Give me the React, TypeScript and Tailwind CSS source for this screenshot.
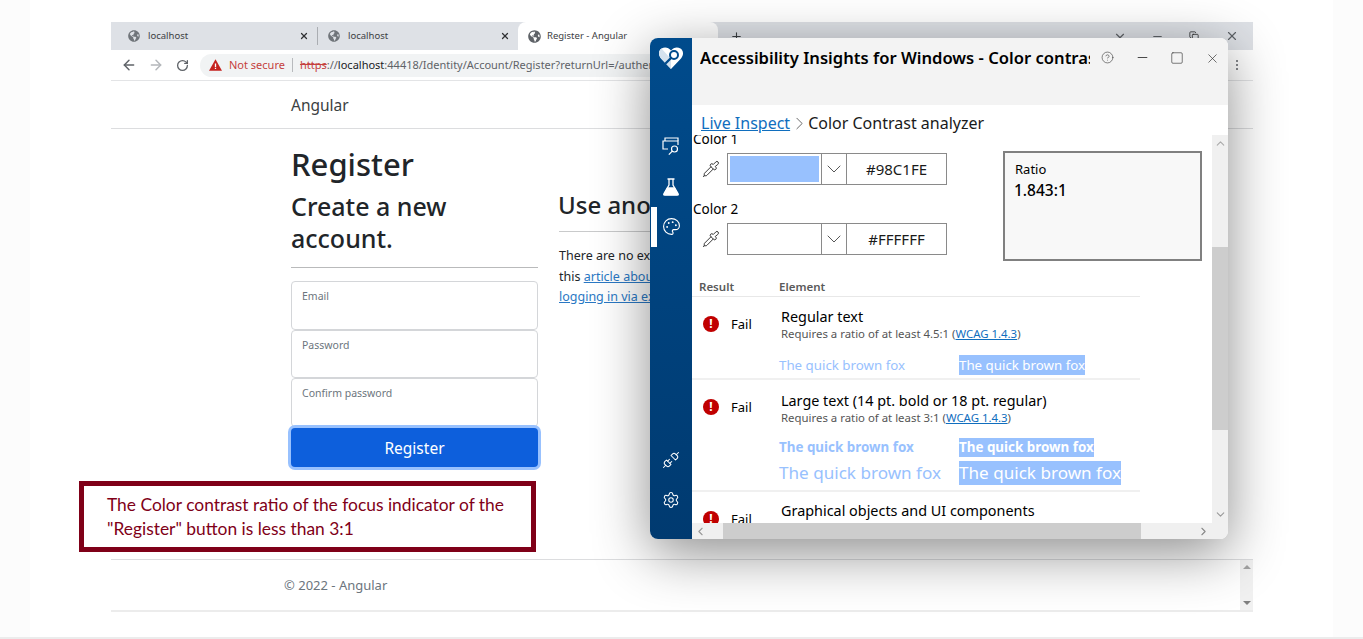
import {
  ArrowLeft,
  ArrowRight,
  ChevronDown,
  ChevronLeft,
  ChevronRight,
  ChevronUp,
  CircleHelp,
  Copy,
  Minus,
  Palette,
  Pipette,
  Plus,
  RotateCw,
  Settings,
  Square,
  Unplug,
  X,
} from "lucide-react";
import { FaGlobeAmericas } from "react-icons/fa";

function BrowserTab({ title, first }: { title: string; first?: boolean }) {
  return (
    <div className={"flex h-[28px] items-center text-[#3c4043] " + (first ? "w-[207px] pl-[17px]" : "w-[200px] pl-[10px]")}>
      <FaGlobeAmericas className="size-[12px] text-[#70757a]" />
      <span className="ml-[8px] text-[9.500px]">{title}</span>
      <X className="ml-auto mr-[8px] size-[10px] text-[#303134]" strokeWidth={3} />
      {first && <div className="h-[18px] w-px bg-[#aaadb2]" />}
    </div>
  );
}

function BrowserChrome() {
  return (
    <>
      <div className="flex h-[28px] items-center bg-[#dee1e6] pr-[14px]">
        <BrowserTab title="localhost" first />
        <BrowserTab title="localhost" />
        <div className="flex h-[28px] w-[200px] items-center gap-[6px] rounded-t-[8px] bg-white pl-[10px] text-[#3c4043]">
          <FaGlobeAmericas className="size-[13px] text-[#5f6368]" />
          <span className="text-[9.500px]">Register - Angular</span>
        </div>
        <Plus className="ml-[12px] size-[13px] text-[#3c4043]" />
        <ChevronDown className="ml-auto size-[14px] text-[#5f6368]" />
        <Minus className="ml-[24px] size-[13px] text-[#5f6368]" />
        <Copy className="ml-[25px] size-[10px] text-[#303134]" />
        <X className="ml-[26px] size-[14px] text-[#5f6368]" />
      </div>
      <div className="flex h-[31px] items-center border-b border-[#e3e4e6] bg-white pl-[10px] pr-[15px]">
        <ArrowLeft className="size-[16px] text-[#5f6368]" strokeWidth={2.2} />
        <ArrowRight className="ml-[11px] size-[16px] text-[#b4b7bb]" strokeWidth={2.2} />
        <RotateCw className="ml-[12px] size-[13px] text-[#5f6368]" strokeWidth={2.4} />
        <div className="ml-[11px] flex h-[23px] flex-1 items-center rounded-l-full bg-[#f1f3f4] pl-[9px]">
          <svg viewBox="0 0 16 14" className="h-[12px] w-[13px] fill-[#c5221f]">
            <path d="M8 0 16 14H0Z" />
            <path d="M7.2 5h1.6v4.5H7.2Zm0 5.5h1.6V12H7.2Z" fill="#fff" />
          </svg>
          <span className="ml-[7px] text-[11px] text-[#c5413d]">Not secure</span>
          <div className="ml-[7px] h-[14px] w-px bg-[#b8babd]" />
          <span className="ml-[7px] whitespace-nowrap text-[11px] text-[#5f6368]">
            <span className="text-[#c5413d] line-through">https</span>://
            <span className="text-[#202124]">localhost</span>:44418/Identity/Account/Register?returnUrl=/authentication
          </span>
        </div>
        <div className="ml-[10px] flex flex-col gap-[2px]">
          <div className="size-[2px] rounded-full bg-[#5f6368]" />
          <div className="size-[2px] rounded-full bg-[#5f6368]" />
          <div className="size-[2px] rounded-full bg-[#5f6368]" />
        </div>
      </div>
    </>
  );
}

function Field({ label, height }: { label: string; height: string }) {
  return (
    <div className={"rounded-[4px] border border-[#d4d6d9] bg-white pl-[10px] pt-[7px] text-[10.500px] text-[#6c757d] " + height}>
      {label}
    </div>
  );
}

function RegisterPage() {
  return (
    <div className="flex h-[430px] gap-[21px] pl-[180px] text-[#212529]">
      <div className="w-[247px]">
        <h1 className="mt-[14px] text-[31px] font-medium leading-[42px]">Register</h1>
        <h2 className="mt-[5px] text-[25px] font-medium leading-[32px]">Create a new account.</h2>
        <div className="mt-[13px] h-px bg-[#b9babb]" />
        <div className="mt-[13px]">
          <Field label="Email" height="h-[49px]" />
          <Field label="Password" height="h-[48px]" />
          <Field label="Confirm password" height="h-[49px]" />
        </div>
        <button className="mt-px h-[39px] w-full rounded-[4px] bg-[#0d5fdc] pt-[2px] text-[15.500px] text-white ring-[3px] ring-[#98c1fe]">
          Register
        </button>
      </div>
      <div className="w-[400px]">
        <h2 className="-ml-px mt-[60px] whitespace-nowrap text-[24px] font-medium leading-[32px]">
          Use another service to register.
        </h2>
        <div className="mt-[10px] h-px bg-[#c9cacb]" />
        <p className="mt-[14px] whitespace-nowrap text-[12.500px] leading-[20.500px]">
          There are no external authentication services configured. See
          <br />
          this <span className="text-[#2a78c4] underline">article about setting up this ASP.NET application to support</span>
          <br />
          <span className="text-[#2a78c4] underline">logging in via external services</span>.
        </p>
      </div>
    </div>
  );
}

function PageFooter() {
  return (
    <>
      <div className="flex h-[51px] border-t border-[#dcdddf]">
        <div className="flex-1 pl-[173px] pt-[16px] text-[13px] text-[#6c757d]">© 2022 - Angular</div>
        <div className="flex w-[13px] flex-col items-center justify-between bg-[#f1f1f1] py-[5px]">
          <div className="size-0 border-x-[4px] border-b-[4px] border-x-transparent border-b-[#a3a3a3]" />
          <div className="size-0 border-x-[4px] border-t-[4px] border-x-transparent border-t-[#808080]" />
        </div>
      </div>
      <div className="h-[2px] bg-[#ececec]" />
    </>
  );
}

function ColorRow({ value, swatch }: { value: string; swatch?: boolean }) {
  return (
    <div className="mt-[5px] flex h-[32px] items-center pl-[10px]">
      <Pipette className="size-[18px] text-[#222]" strokeWidth={1.2} />
      <div className="ml-[7px] flex h-[32px] w-[220px] border border-[#8a8a8a] bg-white">
        <div className="w-[93px] p-[2px]">{swatch && <div className="h-full bg-[#98c1fe]" />}</div>
        <div className="flex w-[26px] items-center justify-center border-x border-[#8a8a8a]">
          <ChevronDown className="size-[24px] text-[#444]" strokeWidth={0.9} />
        </div>
        <div className="flex flex-1 items-center justify-center text-[15px] text-[#1a1a1a]">{value}</div>
      </div>
    </div>
  );
}

function FailIcon() {
  return (
    <div className="flex size-[16px] items-center justify-center rounded-full bg-[#c00000] text-[12px] font-bold leading-none text-white">
      !
    </div>
  );
}

function Requirement({ title, ratio, titlePad }: { title: string; ratio: string; titlePad: string }) {
  return (
    <div className="flex">
      <div className="flex h-[52px] w-[89px] shrink-0 items-start gap-[12px] pl-[11px] pt-[19px]">
        <FailIcon />
        <span className="text-[13px] leading-[16px] text-black">Fail</span>
      </div>
      <div className={titlePad}>
        <div className="text-[14.400px] leading-[19px] text-black">{title}</div>
        {ratio && (
          <div className="text-[11.400px] leading-[16px] text-[#555]">
            Requires a ratio of at least {ratio} (<span className="text-[#106ebe] underline">WCAG 1.4.3</span>)
          </div>
        )}
      </div>
    </div>
  );
}

function Sample({ className }: { className: string }) {
  return (
    <div className="grid grid-cols-[180px_auto] justify-start pl-[87px]">
      <div className={"text-[#98c1fe] " + className}>The quick brown fox</div>
      <div className={"w-fit bg-[#98c1fe] text-white " + className}>The quick brown fox</div>
    </div>
  );
}

function ContrastContent() {
  return (
    <div className="relative -mt-[5px] h-[398px] w-[520px] text-black">
      <div className="flex">
        <div className="w-[311px]">
          <div className="pl-[1px] text-[13.500px] leading-[18px]">Color 1</div>
          <ColorRow value="#98C1FE" swatch />
          <div className="mt-[15px] pl-[1px] text-[13.500px] leading-[18px]">Color 2</div>
          <ColorRow value="#FFFFFF" />
        </div>
        <div className="mt-[21px] h-[110px] w-[199px] border-2 border-[#808080] bg-[#f8f8f8] pl-[10px] pt-[6px]">
          <div className="text-[13px] leading-[20px]">Ratio</div>
          <div className="-ml-px text-[15.500px] font-medium leading-[22px]">1.843:1</div>
        </div>
      </div>
      <div className="mt-[17px] flex h-[19px] w-[448px] border-b border-[#e8e8e8] pl-[7px] text-[11.500px] font-semibold leading-[18px] text-[#5a5a5a]">
        <span className="w-[80px]">Result</span>
        <span>Element</span>
      </div>
      <div className="h-[83px] w-[448px] border-b-2 border-[#f0f0f0]">
        <Requirement title="Regular text" ratio="4.5:1" titlePad="pt-[10px]" />
        <div className="mt-[6px]">
          <Sample className="text-[13.300px] leading-[20px]" />
        </div>
      </div>
      <div className="h-[112px] w-[448px] border-b-2 border-[#f0f0f0]">
        <Requirement title="Large text (14 pt. bold or 18 pt. regular)" ratio="3:1" titlePad="pt-[11px]" />
        <div className="mt-[6px]">
          <Sample className="text-[13.400px] font-bold leading-[19px]" />
        </div>
        <div className="mt-[4px]">
          <Sample className="text-[17.100px] leading-[24px]" />
        </div>
      </div>
      <Requirement title="Graphical objects and UI components" ratio="" titlePad="pt-[9px]" />
    </div>
  );
}

function InsightsWindow() {
  return (
    <div className="absolute left-[650px] top-[38px] flex h-[501px] w-[578px] overflow-hidden rounded-[8px] bg-white shadow-[0_14px_55px_rgba(0,0,0,0.45)]">
      <div className="relative flex w-[42px] flex-col items-center bg-gradient-to-b from-[#004b8c] to-[#003a70] pb-[30px] pt-[9px] text-white">
        <svg viewBox="0 0 24 22" className="h-[22px] w-[24px]">
          <path d="M12 22 2 11.500C-1 8-.5 3.500 2.500 1.500 6-.5 9.500.5 12 3.500 14.500.5 18-.5 21.500 1.500 24.500 3.500 25 8 22 11.500Z" fill="#fff" />
          <path d="M12 22 2 11.500C-1 8-.5 3.500 2.500 1.500L12 12Z" fill="#d5e2ee" />
          <circle cx="15" cy="8" r="4" fill="none" stroke="#004b8c" strokeWidth="2" />
          <path d="M12 11 7 16" stroke="#004b8c" strokeWidth="2.400" strokeLinecap="round" />
        </svg>
        <svg viewBox="0 0 20 20" className="mt-[67px] size-[20px] fill-none stroke-white" strokeWidth="1.200">
          <path d="M4 5V2h13v3" />
          <path d="M7 13H2V5h15v4" />
          <circle cx="13.500" cy="13" r="3" />
          <path d="m11.300 15.200-3.500 3.500" />
        </svg>
        <svg viewBox="0 0 20 20" className="mt-[21px] size-[20px] fill-none stroke-white" strokeWidth="1.300">
          <path d="M6.500 2h7M8 2v6L3 16.500a1 1 0 0 0 1 1.500h12a1 1 0 0 0 1-1.500L12 8V2" />
          <path d="M6.500 11h7l3.500 6.500H3Z" fill="#fff" />
        </svg>
        <Palette className="mt-[20px] size-[19px]" strokeWidth={1.4} />
        <div className="absolute left-[1px] top-[169px] h-[40px] w-[6px] bg-white" />
        <Unplug className="mt-auto size-[18px]" strokeWidth={1.4} />
        <Settings className="mt-[22px] size-[18px]" strokeWidth={1.4} />
      </div>
      <div className="flex min-w-0 flex-1 flex-col">
        <div className="flex h-[67px] items-start bg-[#f3f3f3] pl-[8px] pt-[9px]">
          <div className="w-[390px] shrink-0 overflow-hidden whitespace-nowrap text-[16.600px] font-semibold leading-[22px] text-black">
            Accessibility Insights for Windows - Color contrast
          </div>
          <CircleHelp className="ml-[11px] mt-[4px] size-[13px] text-[#444]" strokeWidth={1.2} />
          <Minus className="ml-[21px] mt-[3px] size-[15px] text-[#222]" strokeWidth={1.3} />
          <Square className="ml-[20px] mt-[4px] size-[14px] text-[#222]" strokeWidth={1} />
          <X className="ml-[21px] mt-[4px] size-[15px] text-[#333]" strokeWidth={1.1} />
        </div>
        <div className="flex h-[30px] items-center pl-[9px] pt-[6px] text-[16px] text-[#1a1a1a]">
          <span className="text-[#106ebe] underline">Live Inspect</span>
          <ChevronRight className="-ml-px -mr-[2px] size-[21px] text-[#555]" strokeWidth={1} />
          <span>Color Contrast analyzer</span>
        </div>
        <div className="flex min-h-0 flex-1">
          <div className="min-w-0 flex-1 overflow-hidden">
            <ContrastContent />
          </div>
          <div className="flex w-[16px] flex-col items-center bg-[#f0f0f0]">
            <ChevronUp className="mt-[2px] size-[13px] text-[#aaa]" />
            <div className="mt-[97px] h-[183px] w-full bg-[#cdcdcd]" />
            <ChevronDown className="mt-auto mb-[2px] size-[13px] text-[#999]" />
          </div>
        </div>
        <div className="flex h-[16px] items-center bg-[#f0f0f0]">
          <ChevronLeft className="ml-[2px] size-[13px] text-[#999]" />
          <div className="ml-[16px] h-full w-[418px] bg-[#cdcdcd]" />
          <ChevronRight className="ml-auto mr-[18px] size-[13px] text-[#888]" />
        </div>
      </div>
    </div>
  );
}

export default function App() {
  return (
    <div className="relative h-[639px] w-[1363px] overflow-hidden bg-[#fcfcfc] font-['Noto_Sans',sans-serif]">
      <div className="ml-[30px] mr-[30px] h-[637px] overflow-hidden bg-white pl-[81px] pr-[80px] pt-[22px]">
        <BrowserChrome />
        <div className="flex h-[48px] items-center border-b border-[#dcdddf] pl-[180px] pt-[3px] text-[15.500px] text-[#3b3f42]">
          Angular
        </div>
        <RegisterPage />
        <PageFooter />
      </div>
      <div className="h-[2px] bg-[#ececec]" />

      <InsightsWindow />

      <div className="absolute left-[79px] top-[481px] h-[71px] w-[457px] border-[5px] border-[#7f0018] bg-white pl-[23px] pt-[7px] font-['Lato',sans-serif] text-[17.400px] leading-[24px] text-[#7f0018]">
        The Color contrast ratio of the focus indicator of the
        <br />
        "Register" button is less than 3:1
      </div>
    </div>
  );
}
